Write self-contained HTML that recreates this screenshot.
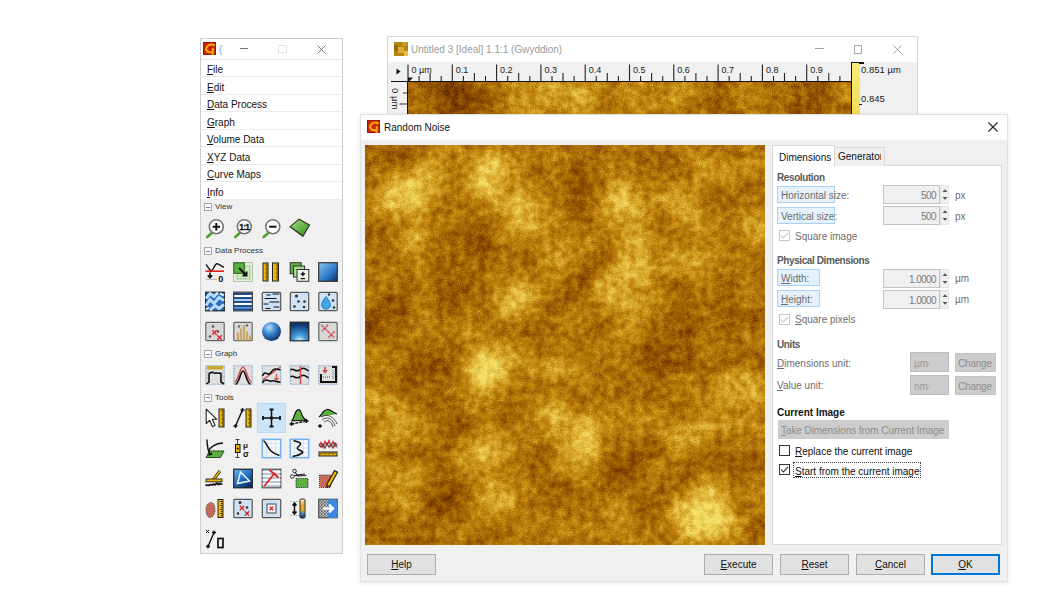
<!DOCTYPE html>
<html><head><meta charset="utf-8"><style>
*{box-sizing:border-box;margin:0;padding:0}
html,body{width:1062px;height:611px;overflow:hidden;background:#fff;font-family:"Liberation Sans",sans-serif;font-size:10px;color:#000}
body{position:relative}
.a{position:absolute}
.t{position:absolute;white-space:nowrap;line-height:12px}
.ul{text-decoration:underline;text-underline-offset:0.5px;text-decoration-thickness:1px}
.mi{position:absolute;left:201px;width:141px;background:#fff;border-bottom:1px solid #ebebeb}
.mi>span{position:absolute;left:6px;line-height:12px;color:#111}
.sec{position:absolute;left:204px;font-size:8px;color:#333;line-height:10px;white-space:nowrap}
.sec i{position:absolute;left:0;top:1px;width:8px;height:8px;border:1px solid #a8a8a8;background:#f8f8f8}
.sec i:after{content:"";position:absolute;left:1px;top:2.5px;width:4px;height:1px;background:#7a7ad8}
.sec b{position:absolute;left:11px;top:0;font-weight:normal}
.btn{position:absolute;height:21px;width:69px;background:#e1e1e1;border:1px solid #adadad;text-align:center;line-height:12px;padding-top:4px;color:#111}
.lbl{position:absolute;left:777px;height:17px;background:#e5f1fb;border:1px solid #a9d1f3;white-space:nowrap}
.spin{position:absolute;left:883px;width:57px;height:19px;border:1px solid #c3c3c3;background:#f0f0f0}
.sarr{position:absolute;left:940px;width:9px;height:19px;background:#f0f0f0;border:1px solid #e4e4e4}
.gray{color:#6d6d6d}
.bold{font-weight:bold;letter-spacing:-0.4px}
.cb{position:absolute;width:11px;height:11px;border:1px solid #333;background:#fff}
svg{position:absolute;overflow:visible}
</style></head><body>
<div class="a" style="left:200px;top:38px;width:143px;height:516px;background:#f0f0f0;border:1px solid #cdcdcd"></div>
<div class="a" style="left:201px;top:39px;width:141px;height:21px;background:#fff;border-bottom:1px solid #e4e4e4"></div>
<svg style="left:203px;top:42px" width="13" height="13" viewBox="0 0 13 13"><rect width="13" height="13" fill="#c8280a"/><rect x="0.5" y="0.5" width="12" height="12" fill="none" stroke="#a01800" stroke-width="1"/><path d="M11 3.2C8.5 1.8 4.5 2.5 3.3 6C2.6 8.6 4.8 10.8 8.3 10.2M9.9 7L9.6 12.3" fill="none" stroke="#ffa810" stroke-width="2.1" stroke-linecap="round"/></svg>
<div class="t " style="left:219px;top:44.0px;color:#8aa0c0">(</div>
<div class="a" style="left:240px;top:48px;width:8px;height:1px;background:#777"></div>
<div class="a" style="left:278px;top:45px;width:9px;height:8px;border:1px solid #e2e2e2"></div>
<svg style="left:317px;top:45px" width="9" height="9"><path d="M0.5 0.5L8.5 8.5M8.5 0.5L0.5 8.5" stroke="#777" stroke-width="1"/></svg>
<div class="mi" style="top:59.5px;height:17.5px"></div>
<div class="t " style="left:207px;top:64.0px;color:#111"><span class="ul">F</span>ile</div>
<div class="mi" style="top:77.0px;height:17.5px"></div>
<div class="t " style="left:207px;top:81.5px;color:#111"><span class="ul">E</span>dit</div>
<div class="mi" style="top:94.5px;height:17.5px"></div>
<div class="t " style="left:207px;top:99.0px;color:#111"><span class="ul">D</span>ata Process</div>
<div class="mi" style="top:112.0px;height:17.5px"></div>
<div class="t " style="left:207px;top:116.5px;color:#111"><span class="ul">G</span>raph</div>
<div class="mi" style="top:129.5px;height:17.5px"></div>
<div class="t " style="left:207px;top:134.0px;color:#111"><span class="ul">V</span>olume Data</div>
<div class="mi" style="top:147.0px;height:17.5px"></div>
<div class="t " style="left:207px;top:151.5px;color:#111"><span class="ul">X</span>YZ Data</div>
<div class="mi" style="top:164.5px;height:17.5px"></div>
<div class="t " style="left:207px;top:169.0px;color:#111"><span class="ul">C</span>urve Maps</div>
<div class="mi" style="top:182.0px;height:17.5px"></div>
<div class="t " style="left:207px;top:186.5px;color:#111"><span class="ul">I</span>nfo</div>
<svg style="left:0;top:0" width="1062" height="611"><rect x="257.5" y="403.5" width="28" height="29" fill="#cce4f7" stroke="#b8daf6" stroke-width="1"/><g transform="translate(205,218)"><path d="M8.5 13.5L2.2 19" stroke="#50a030" stroke-width="2.6" stroke-linecap="round"/><circle cx="11.3" cy="8.7" r="7" fill="#fff" stroke="#777" stroke-width="1.6"/><path d="M11.3 5V12.4M7.6 8.7H15" stroke="#111" stroke-width="2"/></g><g transform="translate(233,218)"><path d="M8.5 13.5L2.2 19" stroke="#50a030" stroke-width="2.6" stroke-linecap="round"/><circle cx="11.3" cy="8.7" r="7" fill="#fff" stroke="#777" stroke-width="1.6"/><text x="11.3" y="11.6" font-family="Liberation Sans" font-weight="bold" font-size="8.5" text-anchor="middle" fill="#111" letter-spacing="-0.8" stroke="#111" stroke-width="0.3">1:1</text></g><g transform="translate(261.5,218)"><path d="M8.5 13.5L2.2 19" stroke="#50a030" stroke-width="2.6" stroke-linecap="round"/><circle cx="11.3" cy="8.7" r="7" fill="#fff" stroke="#777" stroke-width="1.6"/><path d="M7.6 8.7H15" stroke="#111" stroke-width="2"/></g><g transform="translate(289.5,218)"><defs><linearGradient id="gd" x1="0" y1="0" x2="1" y2="1"><stop offset="0" stop-color="#a8e080"/><stop offset="1" stop-color="#2f8a20"/></linearGradient></defs><path d="M0.6 9.6L9.5 2.2L20 7.6L13.5 19.2Z" fill="#222" opacity="0.75"/><path d="M0.6 8.7L9.5 1.2L20 7L13.5 18Z" fill="url(#gd)" stroke="#2a3a20" stroke-width="1.1"/></g><g transform="translate(205,262)"><path d="M1 2.5C3 4.5 4.5 9 6.5 8.8S9.5 1.8 12 1.8S16 4.5 19 5.2" fill="none" stroke="#111" stroke-width="1.4"/><path d="M0.5 9.2H19" stroke="#e02020" stroke-width="1.6"/><path d="M5 10.5V15.5M2.8 13.2L5 15.8L7.2 13.2" fill="none" stroke="#111" stroke-width="1.6"/><path d="M1.5 17.3H12" stroke="#666" stroke-width="1" stroke-dasharray="1 1"/><text x="13.2" y="19.6" font-family="Liberation Sans" font-weight="bold" font-size="9" fill="#111">0</text></g><g transform="translate(233,262)"><rect x="0.5" y="0.5" width="19" height="19" fill="#e4f0d8" stroke="#7a9a6a" stroke-width="1" stroke-dasharray="1 1"/><rect x="4" y="4" width="13" height="13" fill="#cfe8bf" stroke="#9ab88a" stroke-width="0.8"/><rect x="0.8" y="0.8" width="10.5" height="10.5" fill="#5cb040" stroke="#2a5a20" stroke-width="1"/><path d="M6 6L13 13M9.5 13.5H13.5V9.5" fill="none" stroke="#111" stroke-width="2"/></g><g transform="translate(261.5,262)"><rect x="1.5" y="1.0" width="5" height="18" fill="#f2b800" stroke="#222" stroke-width="1"/><path d="M3.8 3.0H6.0M4.6 5.0H6.0M3.8 7.0H6.0M4.6 9.0H6.0M3.8 11.0H6.0M4.6 13.0H6.0M3.8 15.0H6.0M4.6 17.0H6.0" stroke="#222" stroke-width="1"/><rect x="11.0" y="1.0" width="6" height="18" fill="#f2b800" stroke="#222" stroke-width="1"/><path d="M14.3 3.0H16.5M15.1 5.0H16.5M14.3 7.0H16.5M15.1 9.0H16.5M14.3 11.0H16.5M15.1 13.0H16.5M14.3 15.0H16.5M15.1 17.0H16.5" stroke="#222" stroke-width="1"/></g><g transform="translate(289.5,262)"><rect x="0.7" y="0.7" width="11" height="11" fill="#5cb040" stroke="#333" stroke-width="1"/><rect x="4" y="4" width="11" height="11" fill="#a8d890" stroke="#333" stroke-width="1"/><rect x="7.5" y="7.5" width="11.8" height="11.8" fill="#eef6e8" stroke="#333" stroke-width="1"/><path d="M13.4 9.8V14.2M11.2 12H15.6M11.2 16.6H15.6" stroke="#111" stroke-width="1.3"/></g><g transform="translate(318,262)"><defs><linearGradient id="gb" x1="0" y1="0" x2="1" y2="1"><stop offset="0" stop-color="#8cc4f0"/><stop offset="0.6" stop-color="#2c78c8"/><stop offset="1" stop-color="#0c2e60"/></linearGradient></defs><rect x="0.7" y="0.7" width="18.6" height="18.6" fill="url(#gb)" stroke="#333" stroke-width="1.2"/></g><g transform="translate(205,291.5)"><rect x="0.7" y="0.7" width="18.6" height="18.6" fill="#2a6cc0" stroke="#222" stroke-width="1.2"/><path d="M1 7L5 2L9 5L13 1M1 14L5 8L9 12L14 6L19 9M5 19L10 14L14 17L19 13" fill="none" stroke="#b8dcfa" stroke-width="3"/><path d="M1 18L4 16M15 2L19 4" stroke="#d8ecff" stroke-width="2"/></g><g transform="translate(233,291.5)"><rect x="0.7" y="0.7" width="18.6" height="18.6" fill="#fff" stroke="#333" stroke-width="1.2"/><path d="M1 2.5H19M1 6.5H19M1 10.5H19M1 14.5H19M1 17.8H19" stroke="#1e4e8c" stroke-width="2.2"/><path d="M1 8.5H19M1 16H19" stroke="#5a9ad8" stroke-width="1"/></g><g transform="translate(261.5,291.5)"><rect x="0.8" y="0.8" width="18.4" height="18.4" rx="1" fill="#cfe3f5" stroke="#555" stroke-width="1.2"/><path d="M5 3.5H9M11 2.5H18M3 7H15M8 10.5H18M2 12.5H7M12 15.5H18M4 17H9" stroke="#111" stroke-width="1.2"/></g><g transform="translate(289.5,291.5)"><rect x="0.8" y="0.8" width="18.4" height="18.4" rx="1" fill="#cfe3f5" stroke="#555" stroke-width="1.2"/><circle cx="7" cy="4.5" r="1.6" fill="#333"/><circle cx="9" cy="10" r="1.3" fill="#333"/><circle cx="15" cy="10" r="1.3" fill="#333"/><circle cx="5" cy="15" r="1.3" fill="#333"/><circle cx="14.5" cy="15.5" r="1.3" fill="#333"/></g><g transform="translate(318,291.5)"><rect x="0.8" y="0.8" width="18.4" height="18.4" rx="1" fill="#cfe3f5" stroke="#555" stroke-width="1.2"/><path d="M8 5C8 5 3.5 10.5 3.5 13.2A4.5 4.5 0 0 0 12.5 13.2C12.5 10.5 8 5 8 5Z" fill="#40a8e8" stroke="#1a6ab0" stroke-width="0.8"/><circle cx="11" cy="3" r="1.2" fill="#333"/><circle cx="15" cy="9" r="1.3" fill="#333"/><circle cx="16" cy="16" r="1.3" fill="#333"/></g><g transform="translate(205,321.5)"><rect x="0.8" y="0.8" width="18.4" height="18.4" rx="1" fill="#d8d8d8" stroke="#666" stroke-width="1.2"/><circle cx="8" cy="5" r="1.3" fill="#555"/><circle cx="13" cy="10" r="1.3" fill="#555"/><circle cx="5" cy="15" r="1.3" fill="#555"/><path d="M7.3 8.8L11.7 13.2M11.7 8.8L7.3 13.2" stroke="#e02020" stroke-width="1.3"/><path d="M12.3 13.8L16.7 18.2M16.7 13.8L12.3 18.2" stroke="#e02020" stroke-width="1.3"/></g><g transform="translate(233,321.5)"><rect x="0.8" y="0.8" width="18.4" height="18.4" rx="1" fill="#d8d8d8" stroke="#666" stroke-width="1.2"/><path d="M5 19V11M8 19V7M11 19V3.5M14 19V10M17 19V14" stroke="#c8a860" stroke-width="2.2"/><circle cx="14" cy="4" r="1.2" fill="#666"/><circle cx="6" cy="5" r="1.2" fill="#666"/></g><g transform="translate(261.5,321.5)"><defs><radialGradient id="gs" cx="0.38" cy="0.3" r="0.75"><stop offset="0" stop-color="#b8dcf8"/><stop offset="0.45" stop-color="#3c88d0"/><stop offset="1" stop-color="#0a2c5c"/></radialGradient></defs><circle cx="10" cy="10" r="9.5" fill="url(#gs)"/></g><g transform="translate(289.5,321.5)"><defs><radialGradient id="gq" cx="0.5" cy="1" r="0.9"><stop offset="0" stop-color="#f0f8ff"/><stop offset="0.35" stop-color="#48a0e0"/><stop offset="1" stop-color="#0c3470"/></radialGradient></defs><rect x="0.7" y="0.7" width="18.6" height="18.6" fill="url(#gq)" stroke="#222" stroke-width="1.2"/></g><g transform="translate(318,321.5)"><rect x="0.8" y="0.8" width="18.4" height="18.4" rx="1" fill="#d8d8d8" stroke="#666" stroke-width="1.2"/><g stroke="#d84848" stroke-width="1.8" stroke-dasharray="1.2 0.6"><path d="M3.5 3.5L10 10M10 3.5L3.5 10M10 10L16.5 16.5M16.5 10L10 16.5"/></g></g><g transform="translate(205,365)"><rect x="0.8" y="0.8" width="18.4" height="18.4" fill="#e0e0e0" stroke="#8aa8c8" stroke-width="1.1" stroke-dasharray="1 0.5"/><rect x="2" y="1" width="16" height="3.5" fill="#c8a830"/><path d="M1.5 19L4 17V9C5 7 8 7 9 8S11 7 12 8 15 7 16 9V17L19 19" fill="none" stroke="#111" stroke-width="1.6"/><path d="M3 7V15M17 7V15" stroke="#555" stroke-width="0.8" stroke-dasharray="1 1.5"/></g><g transform="translate(233,365)"><rect x="0.8" y="0.8" width="18.4" height="18.4" fill="#e0e0e0" stroke="#8aa8c8" stroke-width="1.1" stroke-dasharray="1 0.5"/><path d="M1.5 17C5 17 7 2 10 2S15 17 18.5 17" fill="none" stroke="#d05050" stroke-width="1.5"/><path d="M2.5 19C6 19 7.5 6 10 6S14 19 17.5 19" fill="none" stroke="#111" stroke-width="1.7"/></g><g transform="translate(261.5,365)"><rect x="0.8" y="0.8" width="18.4" height="18.4" fill="#e0e0e0" stroke="#8aa8c8" stroke-width="1.1" stroke-dasharray="1 0.5"/><path d="M1 15L19 2" stroke="#d05050" stroke-width="1.4"/><path d="M1 11C4 4 6 12 9 8S13 3 19 5" fill="none" stroke="#111" stroke-width="1.6"/><path d="M1 18C4 12 7 17 10 16S14 17 19 17" fill="none" stroke="#111" stroke-width="1.6"/><path d="M15 9V15M13 13L15 15L17 13" fill="none" stroke="#d05050" stroke-width="1.3"/></g><g transform="translate(289.5,365)"><rect x="0.8" y="0.8" width="18.4" height="18.4" fill="#e0e0e0" stroke="#8aa8c8" stroke-width="1.1" stroke-dasharray="1 0.5"/><path d="M1 5C4 2 6 8 10 5S15 3 19 6M1 12C4 9 6 15 10 12S15 10 19 13" fill="none" stroke="#111" stroke-width="1.6"/><path d="M11 1V19" stroke="#d05050" stroke-width="1.6"/></g><g transform="translate(318,365)"><rect x="0.8" y="0.8" width="18.4" height="18.4" fill="#e0e0e0" stroke="#8aa8c8" stroke-width="1.1" stroke-dasharray="1 0.5"/><path d="M3 9V17H18V2H14" fill="none" stroke="#111" stroke-width="2"/><path d="M7 2V7M5 5L7 7.5L9 5" fill="none" stroke="#d05050" stroke-width="1.6"/><path d="M15 5V15M17 6V14" stroke="#555" stroke-width="0.8" stroke-dasharray="1 1"/><path d="M5 12H12" stroke="#333" stroke-width="0.8" stroke-dasharray="1 1"/></g><g transform="translate(205,408)"><path d="M1.2 1.2V15.5L4.6 12.3L7.4 18.6L10 17.4L7.3 11.3H11.8Z" fill="#fff" stroke="#222" stroke-width="1.1" stroke-linejoin="round"/><rect x="14.0" y="1.0" width="5" height="18" fill="#f2b800" stroke="#222" stroke-width="1"/><path d="M16.3 3.0H18.5M17.1 5.0H18.5M16.3 7.0H18.5M17.1 9.0H18.5M16.3 11.0H18.5M17.1 13.0H18.5M16.3 15.0H18.5M17.1 17.0H18.5" stroke="#222" stroke-width="1"/></g><g transform="translate(233,408)"><path d="M2.5 18L9.5 2" stroke="#111" stroke-width="1.4"/><path d="M2.5 16V20M0.5 18H4.5M9.5 0V4M7.5 2H11.5" stroke="#111" stroke-width="1.4"/><rect x="13.0" y="1.0" width="5" height="18" fill="#f2b800" stroke="#222" stroke-width="1"/><path d="M15.3 3.0H17.5M16.1 5.0H17.5M15.3 7.0H17.5M16.1 9.0H17.5M15.3 11.0H17.5M16.1 13.0H17.5M15.3 15.0H17.5M16.1 17.0H17.5" stroke="#222" stroke-width="1"/></g><g transform="translate(261.5,408)"><path d="M10 1V19M1 10H19" stroke="#111" stroke-width="1.5"/><path d="M8 1.5H12M8 18.5H12M1.5 8V12M18.5 8V12" stroke="#111" stroke-width="1.8"/><circle cx="10" cy="10" r="1.8" fill="#111"/></g><g transform="translate(289.5,408)"><path d="M2 13C4 12 5 5 7 3S10 1.5 11 3 12 10 17 12Z" fill="#5cb040" stroke="#111" stroke-width="1.2"/><path d="M2 16L17 13" stroke="#111" stroke-width="1.5" stroke-dasharray="3 1"/><path d="M2 14V18M0 16H4M17 11V15M15 13H19" stroke="#111" stroke-width="1.3"/></g><g transform="translate(318,408)"><path d="M1 9C4 7 5 2 9 1.5S13 4 19 6" fill="#5cb040" stroke="#111" stroke-width="1.2"/><path d="M4 12C9 8 14 10 17 18M6 14C10 11 13 13 15 19M3 9C10 5 16 9 19 16" fill="none" stroke="#444" stroke-width="0.9"/><path d="M2 16V20M0 18H4" stroke="#111" stroke-width="1.3"/></g><g transform="translate(205,438.5)"><path d="M1 19L4.5 12.5H19L15.5 19Z" fill="#5cb040" stroke="#2a4a20" stroke-width="1"/><path d="M2 1C2.2 8 3 13 5 15.5" fill="none" stroke="#111" stroke-width="1.4"/><path d="M3.5 13C6 7 11 5 18 4.5" fill="none" stroke="#111" stroke-width="1.4"/><path d="M3.5 16.5L7 15" stroke="#111" stroke-width="2"/></g><g transform="translate(233,438.5)"><path d="M4.5 1V19M2.5 1H6.5M2.5 19H6.5" stroke="#333" stroke-width="0.9"/><rect x="2.5" y="6" width="4.5" height="8" fill="#f2b800" stroke="#111" stroke-width="1"/><circle cx="4.7" cy="10" r="1" fill="#111"/><text x="10" y="9" font-family="Liberation Sans" font-weight="bold" font-size="8" fill="#111">μ</text><text x="10" y="18" font-family="Liberation Sans" font-weight="bold" font-size="8.5" fill="#111">σ</text></g><g transform="translate(261.5,438.5)"><rect x="0.8" y="0.8" width="18.4" height="18.4" fill="#f4f8fc" stroke="#70b0f0" stroke-width="1.5"/><path d="M5 1V19M9.5 1V19M14 1V19M1 5H19M1 9.5H19M1 14H19" stroke="#d0d8e0" stroke-width="0.6"/><path d="M2 2C5 4 6 9 9 12S14 16 18 17" fill="none" stroke="#111" stroke-width="1.5"/></g><g transform="translate(289.5,438.5)"><rect x="0.8" y="0.8" width="18.4" height="18.4" fill="#f4f8fc" stroke="#70b0f0" stroke-width="1.5"/><path d="M5 1V19M9.5 1V19M14 1V19M1 5H19M1 9.5H19M1 14H19" stroke="#d0d8e0" stroke-width="0.6"/><path d="M4 2C9 4 14 4 9 8S17 12 12 15S5 17 3 18" fill="none" stroke="#111" stroke-width="1.5"/></g><g transform="translate(318,438.5)"><path d="M1 8L3 4L5 9L7 3L9 7L11 2L13 8L15 3L17 8L19 5" fill="none" stroke="#e02020" stroke-width="1.2"/><path d="M1 5L3 9L5 5L7 10L9 4L11 9L13 5L15 10L17 4L19 9" fill="none" stroke="#444" stroke-width="1"/><rect x="1.0" y="13.5" width="18" height="4" fill="#f2b800" stroke="#222" stroke-width="1"/><path d="M3.0 14.0V16.2M5.0 14.0V15.4M7.0 14.0V16.2M9.0 14.0V15.4M11.0 14.0V16.2M13.0 14.0V15.4M15.0 14.0V16.2M17.0 14.0V15.4" stroke="#222" stroke-width="0.8"/></g><g transform="translate(205,468.5)"><path d="M8.5 11L15 2.5" stroke="#222" stroke-width="3"/><path d="M8.5 11L15 2.5" stroke="#f2b800" stroke-width="1.6"/><rect x="1" y="10.5" width="16" height="2.8" fill="#f2b800" stroke="#222" stroke-width="0.9"/><path d="M0.5 17C2 15.5 3 18 4.5 16.5S7 17.5 8 16 10 18 11 15.5 13 17.5 14 15.5 16 17 17 15" fill="none" stroke="#111" stroke-width="1.8"/></g><g transform="translate(233,468.5)"><defs><linearGradient id="gt" x1="0" y1="0" x2="0.7" y2="1"><stop offset="0" stop-color="#6ab4ec"/><stop offset="0.5" stop-color="#2a78c8"/><stop offset="1" stop-color="#0a2c68"/></linearGradient></defs><rect x="0.7" y="0.7" width="18.6" height="18.6" fill="url(#gt)" stroke="#222" stroke-width="1.2"/><path d="M7.5 3.5L16.5 12.5L4.5 15Z" fill="none" stroke="#e8f4ff" stroke-width="1.5"/></g><g transform="translate(261.5,468.5)"><rect x="0.7" y="0.7" width="18.6" height="18.6" fill="#b8c4d0" stroke="#555" stroke-width="1.2"/><path d="M1 3.5H19M1 7.5H19M1 11.5H19M1 15.5H19" stroke="#f4f8fc" stroke-width="1.8"/><path d="M8 1.5L17 9M13.4 4.2L2.7 17.8" stroke="#e02020" stroke-width="1.7"/></g><g transform="translate(289.5,468.5)"><rect x="6.5" y="10" width="12" height="9" fill="#5cb040" stroke="#222" stroke-width="0.9" stroke-dasharray="1 0.8"/><circle cx="5" cy="2.5" r="1.8" fill="none" stroke="#333" stroke-width="1"/><circle cx="2.8" cy="8" r="1.8" fill="none" stroke="#333" stroke-width="1"/><path d="M5.8 4L8 7.5L17 7M4.5 7.5L8 6.5L15.5 5.5" fill="none" stroke="#222" stroke-width="1.2"/></g><g transform="translate(318,468.5)"><path d="M1.5 6.5H12.5V19H1.5Z" fill="#c86a5a" stroke="#333" stroke-width="0.9" stroke-dasharray="1 1"/><path d="M9 15.5L16.5 2L19.5 3.7L12 17.2L9 18.8Z" fill="#f2b800" stroke="#222" stroke-width="1.2"/><path d="M9 18.8L9.8 16.8" stroke="#222" stroke-width="1"/></g><g transform="translate(205,498.5)"><path d="M6 4C9 4 10 8 10 12S8 19 5 19S1 15 1 11S3 4 6 4Z" fill="#c86a5a" stroke="#444" stroke-width="0.9" stroke-dasharray="1 1"/><rect x="13.0" y="1.0" width="5" height="18" fill="#f2b800" stroke="#222" stroke-width="1"/><path d="M15.3 3.0H17.5M16.1 5.0H17.5M15.3 7.0H17.5M16.1 9.0H17.5M15.3 11.0H17.5M16.1 13.0H17.5M15.3 15.0H17.5M16.1 17.0H17.5" stroke="#222" stroke-width="1"/></g><g transform="translate(233,498.5)"><rect x="0.8" y="0.8" width="18.4" height="18.4" rx="1" fill="#cfe3f5" stroke="#555" stroke-width="1.2"/><circle cx="7" cy="4" r="1.5" fill="#333"/><circle cx="14" cy="9" r="1.3" fill="#333"/><circle cx="5" cy="15" r="1.3" fill="#333"/><path d="M6.8 7.3L11.2 11.7M11.2 7.3L6.8 11.7" stroke="#e02020" stroke-width="1.3"/><path d="M11.8 12.8L16.2 17.2M16.2 12.8L11.8 17.2" stroke="#e02020" stroke-width="1.3"/></g><g transform="translate(261.5,498.5)"><rect x="0.8" y="0.8" width="18.4" height="18.4" rx="1" fill="#cfe3f5" stroke="#555" stroke-width="1.2"/><rect x="5.5" y="5.5" width="9" height="9" fill="#f0f4f8" stroke="#555" stroke-width="1.1"/><path d="M8.2 8.2L11.8 11.8M11.8 8.2L8.2 11.8" stroke="#e02020" stroke-width="1.3"/></g><g transform="translate(289.5,498.5)"><path d="M1 3H17M1 17H17" stroke="#888" stroke-width="0.7" stroke-dasharray="1 0.8"/><path d="M5 5V15M3 7L5 4.5L7 7M3 13L5 15.5L7 13" fill="none" stroke="#111" stroke-width="1.5"/><defs><linearGradient id="gc" x1="0" y1="0" x2="0" y2="1"><stop offset="0" stop-color="#fff0d0"/><stop offset="0.3" stop-color="#f8a040"/><stop offset="0.55" stop-color="#f0b000"/><stop offset="0.75" stop-color="#4a90d0"/><stop offset="1" stop-color="#102040"/></linearGradient></defs><rect x="10.5" y="0.5" width="5" height="19" rx="1" fill="url(#gc)" stroke="#333" stroke-width="1"/></g><g transform="translate(318,498.5)"><defs><pattern id="pn" width="3" height="3" patternUnits="userSpaceOnUse"><rect width="3" height="3" fill="#eee"/><rect width="1.5" height="1.5" fill="#222"/><rect x="1.5" y="1.5" width="1.5" height="1.5" fill="#555"/></pattern></defs><rect x="0.7" y="0.7" width="18.6" height="18.6" fill="url(#pn)" stroke="#444" stroke-width="1"/><rect x="10" y="1" width="9.3" height="18.3" fill="#3a8ae0"/><path d="M5 10H14M11 6L15 10L11 14" fill="none" stroke="#fff" stroke-width="2.4"/></g><g transform="translate(205,528.5)"><path d="M1 1.5L4 4.5M4 1.5L1 4.5" stroke="#111" stroke-width="1"/><path d="M3 18L9 4" stroke="#111" stroke-width="1.4"/><path d="M3 16V20M1 18H5M9 2V6M7 4H11" stroke="#111" stroke-width="1.3"/><rect x="13" y="10" width="5" height="9" fill="none" stroke="#111" stroke-width="1.7"/></g></svg>
<div class="sec" style="top:202px"><i></i><b>View</b></div>
<div class="sec" style="top:246px"><i></i><b>Data Process</b></div>
<div class="sec" style="top:349px"><i></i><b>Graph</b></div>
<div class="sec" style="top:392.5px"><i></i><b>Tools</b></div>
<div class="a" style="left:387px;top:36px;width:531px;height:80px;background:#f0f0f0;border:1px solid #d8d8d8"></div>
<div class="a" style="left:388px;top:37px;width:529px;height:25px;background:#fff"></div>
<svg style="left:394px;top:42px" width="14" height="14"><rect width="14" height="14" fill="#b88410"/><rect x="0" y="3" width="4" height="6" fill="#9a6a08"/><rect x="4" y="5" width="6" height="6" fill="#d8b038"/><rect x="8" y="0" width="5" height="4" fill="#c89a28"/><rect x="10" y="9" width="4" height="5" fill="#e0c048"/></svg>
<div class="t " style="left:411px;top:44.0px;color:#9a9a9a">Untitled 3 [Ideal] 1.1:1 (Gwyddion)</div>
<div class="a" style="left:815px;top:48px;width:8.5px;height:1px;background:#a0a0a0"></div>
<div class="a" style="left:853.5px;top:45px;width:8.5px;height:8.5px;border:1px solid #a8a8a8"></div>
<div class="a" style="left:391px;top:80.5px;width:460px;height:1.6px;background:#111"></div>
<div class="a" style="left:406.5px;top:81px;width:1.5px;height:35px;background:#111"></div>
<svg style="left:396px;top:68px" width="5" height="7"><path d="M0.5 0.5L4.5 3.5L0.5 6.5Z" fill="#111"/></svg>
<svg style="left:407.5px;top:76.5px" width="6" height="6"><path d="M0 0.5L5 0.5L0 5.5Z" fill="#111"/></svg>
<svg style="left:0;top:0" width="1062" height="120"><path d="M408.0 64.5V81 M419.1 76V81 M430.1 73V81 M441.2 76V81 M452.3 64.5V81 M463.4 76V81 M474.4 73V81 M485.5 76V81 M496.6 64.5V81 M507.7 76V81 M518.7 73V81 M529.8 76V81 M540.9 64.5V81 M552.0 76V81 M563.0 73V81 M574.1 76V81 M585.2 64.5V81 M596.3 76V81 M607.3 73V81 M618.4 76V81 M629.5 64.5V81 M640.6 76V81 M651.6 73V81 M662.7 76V81 M673.8 64.5V81 M684.9 76V81 M695.9 73V81 M707.0 76V81 M718.1 64.5V81 M729.2 76V81 M740.2 73V81 M751.3 76V81 M762.4 64.5V81 M773.5 76V81 M784.5 73V81 M795.6 76V81 M806.7 64.5V81 M817.8 76V81 M828.8 73V81 M839.9 76V81" stroke="#222" stroke-width="1.1"/><path d="M403 93H407M399.5 104H407" stroke="#333" stroke-width="1"/></svg>
<div class="t" style="left:411.5px;top:65.3px;font-size:9px;line-height:10px;color:#222">0 µm</div>
<div class="t" style="left:455.8px;top:65.3px;font-size:9px;line-height:10px;color:#222">0.1</div>
<div class="t" style="left:500.1px;top:65.3px;font-size:9px;line-height:10px;color:#222">0.2</div>
<div class="t" style="left:544.4px;top:65.3px;font-size:9px;line-height:10px;color:#222">0.3</div>
<div class="t" style="left:588.7px;top:65.3px;font-size:9px;line-height:10px;color:#222">0.4</div>
<div class="t" style="left:633.0px;top:65.3px;font-size:9px;line-height:10px;color:#222">0.5</div>
<div class="t" style="left:677.3px;top:65.3px;font-size:9px;line-height:10px;color:#222">0.6</div>
<div class="t" style="left:721.6px;top:65.3px;font-size:9px;line-height:10px;color:#222">0.7</div>
<div class="t" style="left:765.9px;top:65.3px;font-size:9px;line-height:10px;color:#222">0.8</div>
<div class="t" style="left:810.2px;top:65.3px;font-size:9px;line-height:10px;color:#222">0.9</div>
<div class="t" style="left:400px;top:88px;font-size:9.5px;line-height:10px;color:#222;transform:rotate(90deg);transform-origin:0 0">0 µm</div>
<div class="a" style="left:851px;top:62px;width:9px;height:54px;background:linear-gradient(#f8ec78,#f0dc58);border-left:1.5px solid #111;border-top:1.5px solid #111"></div>
<div class="a" style="left:859px;top:62px;width:5px;height:1.5px;background:#111"></div>
<div class="a" style="left:859px;top:104px;width:3px;height:1px;background:#111"></div>
<div class="t" style="left:861px;top:64.8px;font-size:9.5px;line-height:10px;color:#222">0.851 µm</div>
<div class="t" style="left:861px;top:93.6px;font-size:9.5px;line-height:10px;color:#222">0.845</div>
<svg style="left:893px;top:45px" width="9" height="9"><path d="M0.5 0.5L8.5 8.5M8.5 0.5L0.5 8.5" stroke="#a0a0a0" stroke-width="1"/></svg>
<div class="a" style="left:360px;top:114px;width:648px;height:468px;background:#f0f0f0;border:1px solid #e2e2e2;box-shadow:0 1px 5px rgba(0,0,0,.10)"></div>
<div class="a" style="left:361px;top:115px;width:646px;height:25px;background:#fff"></div>
<svg style="left:367px;top:120px" width="13" height="13" viewBox="0 0 13 13"><rect width="13" height="13" fill="#c8280a"/><rect x="0.5" y="0.5" width="12" height="12" fill="none" stroke="#a01800" stroke-width="1"/><path d="M11 3.2C8.5 1.8 4.5 2.5 3.3 6C2.6 8.6 4.8 10.8 8.3 10.2M9.9 7L9.6 12.3" fill="none" stroke="#ffa810" stroke-width="2.1" stroke-linecap="round"/></svg>
<div class="t " style="left:384px;top:121.9px;color:#111">Random Noise</div>
<svg style="left:988px;top:122px" width="10" height="10"><path d="M0.5 0.5L9.5 9.5M9.5 0.5L0.5 9.5" stroke="#222" stroke-width="1.1"/></svg>
<div class="a" style="left:772px;top:165px;width:230px;height:380px;background:#fff;border:1px solid #d9d9d9"></div>
<div class="a" style="left:834px;top:147px;width:51px;height:19px;background:#f0f0f0;border:1px solid #d9d9d9;border-bottom:none"></div>
<div class="a" style="left:772px;top:145px;width:63px;height:22px;background:#fff;border:1px solid #d9d9d9;border-bottom:none"></div>
<div class="t " style="left:779px;top:151.7px;color:#111">Dimensions</div>
<div class="a" style="left:838px;top:150px;width:43px;height:14px;overflow:hidden"><div class="t" style="left:0;top:1.2px;color:#111">Generator</div></div>
<div class="t bold" style="left:777px;top:172.2px;color:#5a5a5a">Resolution</div>
<div class="lbl" style="top:186px;width:58px"></div>
<div class="t gray" style="left:781px;top:190.2px;">Horizontal size:</div>
<div class="lbl" style="top:207px;width:58px"></div>
<div class="t gray" style="left:781px;top:210.6px;">Vertical size:</div>
<div class="spin" style="top:185px"></div>
<div class="t" style="left:885px;width:51px;text-align:right;top:189.5px;color:#7a7a7a;letter-spacing:-0.6px">500</div>
<div class="sarr" style="top:185px"></div>
<svg style="left:942px;top:188px" width="6" height="13"><path d="M0.5 4L3 1.2L5.5 4Z M0.5 9L3 11.8L5.5 9Z" fill="#555"/></svg>
<div class="spin" style="top:206px"></div>
<div class="t" style="left:885px;width:51px;text-align:right;top:210.5px;color:#7a7a7a;letter-spacing:-0.6px">500</div>
<div class="sarr" style="top:206px"></div>
<svg style="left:942px;top:209px" width="6" height="13"><path d="M0.5 4L3 1.2L5.5 4Z M0.5 9L3 11.8L5.5 9Z" fill="#555"/></svg>
<div class="t gray" style="left:955px;top:190.2px;">px</div>
<div class="t gray" style="left:955px;top:210.6px;">px</div>
<div class="cb" style="left:779px;top:230px;border-color:#c6c6c6"></div>
<svg style="left:779px;top:230px" width="11" height="11"><path d="M2 5.5L4.3 8L9 2.8" fill="none" stroke="#c6c6c6" stroke-width="1.1"/></svg>
<div class="t gray" style="left:795px;top:231.1px;">Square image</div>
<div class="t bold" style="left:777px;top:255.4px;color:#5a5a5a">Physical Dimensions</div>
<div class="lbl" style="top:269px;width:43px"></div>
<div class="t gray" style="left:781px;top:273.4px;"><span class="ul">W</span>idth:</div>
<div class="lbl" style="top:290px;width:43px"></div>
<div class="t gray" style="left:781px;top:293.5px;"><span class="ul">H</span>eight:</div>
<div class="spin" style="top:269px"></div>
<div class="t" style="left:885px;width:51px;text-align:right;top:273.5px;color:#7a7a7a;letter-spacing:-0.6px">1.0000</div>
<div class="sarr" style="top:269px"></div>
<svg style="left:942px;top:272px" width="6" height="13"><path d="M0.5 4L3 1.2L5.5 4Z M0.5 9L3 11.8L5.5 9Z" fill="#555"/></svg>
<div class="spin" style="top:290px"></div>
<div class="t" style="left:885px;width:51px;text-align:right;top:294.5px;color:#7a7a7a;letter-spacing:-0.6px">1.0000</div>
<div class="sarr" style="top:290px"></div>
<svg style="left:942px;top:293px" width="6" height="13"><path d="M0.5 4L3 1.2L5.5 4Z M0.5 9L3 11.8L5.5 9Z" fill="#555"/></svg>
<div class="t gray" style="left:955px;top:273.4px;">µm</div>
<div class="t gray" style="left:955px;top:293.5px;">µm</div>
<div class="cb" style="left:779px;top:314px;border-color:#c6c6c6"></div>
<svg style="left:779px;top:314px" width="11" height="11"><path d="M2 5.5L4.3 8L9 2.8" fill="none" stroke="#c6c6c6" stroke-width="1.1"/></svg>
<div class="t gray" style="left:795px;top:314.3px;"><span class="ul">S</span>quare pixels</div>
<div class="t bold" style="left:777px;top:338.9px;color:#5a5a5a">Units</div>
<div class="t gray" style="left:777px;top:357.8px;"><span class="ul">D</span>imensions unit:</div>
<div class="t gray" style="left:777px;top:379.9px;"><span class="ul">V</span>alue unit:</div>
<div class="a" style="left:910px;top:352px;width:39px;height:20px;background:#cccccc;border:1px solid #bcbcbc"></div>
<div class="t " style="left:914px;top:357.8px;color:#9a9a9a">µm<span style="font-size:7px">⁄</span></div>
<div class="a" style="left:955px;top:353px;width:41px;height:19px;background:#cccccc;border:1px solid #c4c4c4"></div>
<div class="t " style="left:958px;top:357.8px;color:#8c8c8c;letter-spacing:-0.2px">Change</div>
<div class="a" style="left:910px;top:375px;width:39px;height:20px;background:#cccccc;border:1px solid #bcbcbc"></div>
<div class="t " style="left:914px;top:380.8px;color:#9a9a9a">nm<span style="font-size:7px">⁄</span></div>
<div class="a" style="left:955px;top:376px;width:41px;height:19px;background:#cccccc;border:1px solid #c4c4c4"></div>
<div class="t " style="left:958px;top:380.8px;color:#8c8c8c;letter-spacing:-0.2px">Change</div>
<div class="t bold" style="left:777px;top:406.5px;color:#111;letter-spacing:0">Current Image</div>
<div class="a" style="left:778px;top:420px;width:171px;height:19px;background:#cccccc"></div>
<div class="t " style="left:781px;top:424.9px;color:#8c8c8c;letter-spacing:-0.07px"><span class="ul">T</span>ake Dimensions from Current Image</div>
<div class="cb" style="left:779px;top:445px;border-color:#333"></div>
<div class="t " style="left:795px;top:445.7px;color:#111"><span class="ul">R</span>eplace the current image</div>
<div class="cb" style="left:779px;top:464px;border-color:#333"></div>
<svg style="left:779px;top:464px" width="11" height="11"><path d="M2 5.5L4.3 8L9 2.8" fill="none" stroke="#222" stroke-width="1.1"/></svg>
<div class="a" style="left:793px;top:462px;width:128px;height:16px;border:1px dotted #444"></div>
<div class="t " style="left:795px;top:465.6px;color:#111"><span class="ul">S</span>tart from the current image</div>
<div class="btn" style="left:367px;top:554px;"><span class="ul">H</span>elp</div>
<div class="btn" style="left:704px;top:554px;"><span class="ul">E</span>xecute</div>
<div class="btn" style="left:780px;top:554px;"><span class="ul">R</span>eset</div>
<div class="btn" style="left:856px;top:554px;"><span class="ul">C</span>ancel</div>
<div class="btn" style="left:931px;top:554px;border:2px solid #0078d7;padding-top:3px"><span class="ul">O</span>K</div>
<svg style="overflow:hidden;left:365px;top:145px" width="400" height="400"><defs><filter id="nb_m" x="-50%" y="-50%" width="200%" height="200%"><feGaussianBlur stdDeviation="9"/></filter><filter id="ng_m" x="0" y="0" width="100%" height="100%" color-interpolation-filters="sRGB"><feTurbulence type="fractalNoise" baseFrequency="0.03" numOctaves="4" seed="11" result="t1"/><feColorMatrix in="t1" type="matrix" values="1 0 0 0 0 1 0 0 0 0 1 0 0 0 0 0 0 0 0 1" result="g1"/><feTurbulence type="fractalNoise" baseFrequency="0.14" numOctaves="3" seed="16" result="t2"/><feColorMatrix in="t2" type="matrix" values="1 0 0 0 0 1 0 0 0 0 1 0 0 0 0 0 0 0 0 1" result="g2"/><feComposite in="SourceGraphic" in2="g1" operator="arithmetic" k1="0" k2="1" k3="0.45" k4="-0.225" result="h1"/><feComposite in="h1" in2="g2" operator="arithmetic" k1="0" k2="1" k3="0.45" k4="-0.225" result="h2a"/><feTurbulence type="fractalNoise" baseFrequency="0.9" numOctaves="1" seed="20" result="t3"/><feColorMatrix in="t3" type="matrix" values="1 0 0 0 0 1 0 0 0 0 1 0 0 0 0 0 0 0 0 1" result="g3"/><feComposite in="h2a" in2="g3" operator="arithmetic" k1="0" k2="1" k3="0.35" k4="-0.175" result="h2"/><feComponentTransfer in="h2"><feFuncR type="table" tableValues="0.28 0.46 0.62 0.76 0.88 0.96"/><feFuncG type="table" tableValues="0.10 0.22 0.37 0.53 0.71 0.88"/><feFuncB type="table" tableValues="0 0 0.01 0.06 0.22 0.42"/><feFuncA type="discrete" tableValues="1"/></feComponentTransfer></filter></defs><g filter="url(#ng_m)"><rect width="400" height="400" fill="rgb(128,128,128)"/><g filter="url(#nb_m)"><circle cx="40" cy="52" r="25" fill="rgb(200,200,200)"/><circle cx="68" cy="25" r="18" fill="rgb(200,200,200)"/><circle cx="125" cy="30" r="25" fill="rgb(200,200,200)"/><circle cx="158" cy="68" r="22" fill="rgb(200,200,200)"/><circle cx="148" cy="155" r="20" fill="rgb(200,200,200)"/><circle cx="190" cy="112" r="15" fill="rgb(200,200,200)"/><circle cx="45" cy="95" r="16" fill="rgb(171,171,171)"/><circle cx="257" cy="60" r="20" fill="rgb(200,200,200)"/><circle cx="275" cy="92" r="22" fill="rgb(200,200,200)"/><circle cx="320" cy="58" r="18" fill="rgb(200,200,200)"/><circle cx="330" cy="118" r="15" fill="rgb(200,200,200)"/><circle cx="262" cy="145" r="28" fill="rgb(200,200,200)"/><circle cx="392" cy="82" r="15" fill="rgb(200,200,200)"/><circle cx="350" cy="28" r="20" fill="rgb(171,171,171)"/><circle cx="123" cy="222" r="22" fill="rgb(243,243,243)"/><circle cx="188" cy="226" r="14" fill="rgb(200,200,200)"/><circle cx="20" cy="268" r="25" fill="rgb(178,178,178)"/><circle cx="122" cy="305" r="18" fill="rgb(200,200,200)"/><circle cx="188" cy="272" r="20" fill="rgb(185,185,185)"/><circle cx="25" cy="342" r="20" fill="rgb(185,185,185)"/><circle cx="128" cy="357" r="25" fill="rgb(171,171,171)"/><circle cx="215" cy="290" r="25" fill="rgb(200,200,200)"/><circle cx="378" cy="245" r="22" fill="rgb(200,200,200)"/><circle cx="340" cy="370" r="28" fill="rgb(236,236,236)"/><circle cx="277" cy="278" r="18" fill="rgb(171,171,171)"/><circle cx="329" cy="285" r="20" fill="rgb(171,171,171)"/><circle cx="10" cy="12" r="22" fill="rgb(94,94,94)"/><circle cx="105" cy="112" r="26" fill="rgb(94,94,94)"/><circle cx="218" cy="18" r="22" fill="rgb(100,100,100)"/><circle cx="312" cy="175" r="22" fill="rgb(107,107,107)"/><circle cx="20" cy="170" r="30" fill="rgb(94,94,94)"/><circle cx="213" cy="147" r="20" fill="rgb(94,94,94)"/><circle cx="378" cy="165" r="30" fill="rgb(94,94,94)"/><circle cx="56" cy="242" r="25" fill="rgb(94,94,94)"/><circle cx="78" cy="373" r="28" fill="rgb(94,94,94)"/><circle cx="265" cy="322" r="25" fill="rgb(94,94,94)"/><circle cx="308" cy="213" r="22" fill="rgb(94,94,94)"/></g></g></svg>
<svg style="overflow:hidden;left:408px;top:82px" width="443" height="32"><defs><filter id="nb_s" x="-50%" y="-50%" width="200%" height="200%"><feGaussianBlur stdDeviation="8"/></filter><filter id="ng_s" x="0" y="0" width="100%" height="100%" color-interpolation-filters="sRGB"><feTurbulence type="fractalNoise" baseFrequency="0.03" numOctaves="4" seed="23" result="t1"/><feColorMatrix in="t1" type="matrix" values="1 0 0 0 0 1 0 0 0 0 1 0 0 0 0 0 0 0 0 1" result="g1"/><feTurbulence type="fractalNoise" baseFrequency="0.14" numOctaves="3" seed="28" result="t2"/><feColorMatrix in="t2" type="matrix" values="1 0 0 0 0 1 0 0 0 0 1 0 0 0 0 0 0 0 0 1" result="g2"/><feComposite in="SourceGraphic" in2="g1" operator="arithmetic" k1="0" k2="1" k3="0.45" k4="-0.225" result="h1"/><feComposite in="h1" in2="g2" operator="arithmetic" k1="0" k2="1" k3="0.45" k4="-0.225" result="h2a"/><feTurbulence type="fractalNoise" baseFrequency="0.9" numOctaves="1" seed="32" result="t3"/><feColorMatrix in="t3" type="matrix" values="1 0 0 0 0 1 0 0 0 0 1 0 0 0 0 0 0 0 0 1" result="g3"/><feComposite in="h2a" in2="g3" operator="arithmetic" k1="0" k2="1" k3="0.35" k4="-0.175" result="h2"/><feComponentTransfer in="h2"><feFuncR type="table" tableValues="0.28 0.46 0.62 0.76 0.88 0.96"/><feFuncG type="table" tableValues="0.10 0.22 0.37 0.53 0.71 0.88"/><feFuncB type="table" tableValues="0 0 0.01 0.06 0.22 0.42"/><feFuncA type="discrete" tableValues="1"/></feComponentTransfer></filter></defs><g filter="url(#ng_s)"><rect width="443" height="32" fill="rgb(120,120,120)"/><g filter="url(#nb_s)"><circle cx="115" cy="20" r="25" fill="rgb(165,165,165)"/><circle cx="160" cy="15" r="30" fill="rgb(165,165,165)"/><circle cx="245" cy="10" r="30" fill="rgb(156,156,156)"/><circle cx="20" cy="20" r="20" fill="rgb(133,133,133)"/><circle cx="440" cy="15" r="10" fill="rgb(151,151,151)"/><circle cx="330" cy="15" r="20" fill="rgb(133,133,133)"/><circle cx="40" cy="15" r="30" fill="rgb(86,86,86)"/><circle cx="400" cy="18" r="24" fill="rgb(86,86,86)"/><circle cx="290" cy="25" r="20" fill="rgb(109,109,109)"/></g></g></svg>
</body></html>
